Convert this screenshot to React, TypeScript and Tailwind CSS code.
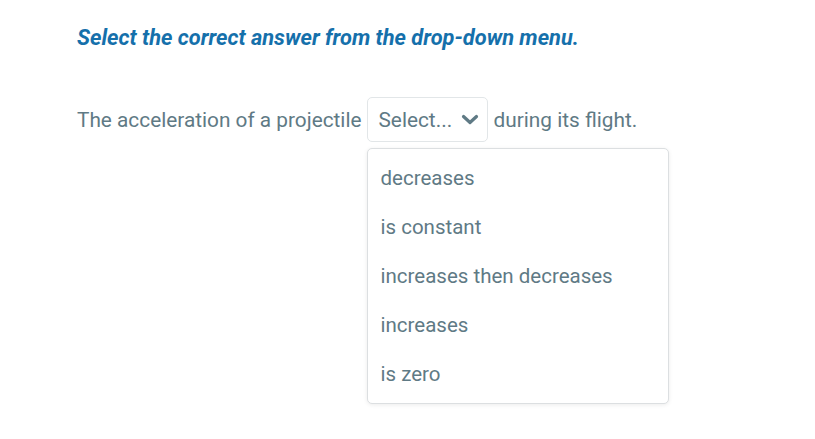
const options = [
  "decreases",
  "is constant",
  "increases then decreases",
  "increases",
  "is zero",
];

export default function App() {
  return (
    <div
      className="min-h-[439px] bg-white px-[77px] pt-[22px] text-[#5f7a85]"
      style={{ fontFamily: "Roboto, 'Liberation Sans', sans-serif" }}
    >
      <h2 className="text-[21.8px] font-bold italic leading-[32px] text-[#1570ab]">
        Select the correct answer from the drop-down menu.
      </h2>

      <div className="mt-[43px] flex items-center text-[20.8px] leading-[28px]">
        <span>The acceleration of a projectile</span>
        <div className="relative ml-[5px] mr-[6px]">
          <button
            type="button"
            className="flex h-[45px] w-[121px] items-center justify-between rounded-[5px] border border-[#e2e6e8] bg-white pl-[11px] pr-[8px] text-[20.8px] text-[#5f7a85]"
          >
            <span>Select...</span>
            <svg width="18" height="13" viewBox="0 0 18 13" fill="none">
              <path
                d="M2.5 3.5l6.5 6 6.5-6"
                stroke="#5f7a85"
                strokeWidth="3.2"
                strokeLinecap="round"
                strokeLinejoin="round"
              />
            </svg>
          </button>

          {/* open menu */}
          <ul className="absolute left-0 top-[51px] w-[302px] rounded-[5px] border border-[#dcdfe1] bg-white pb-[4px] pt-[5px] shadow-[0_1px_4px_rgba(0,0,0,0.08)]">
            {options.map((opt) => (
              <li key={opt} className="h-[49px] px-[13px] text-[20.5px] leading-[49px]">
                {opt}
              </li>
            ))}
          </ul>
        </div>
        <span>during its flight.</span>
      </div>
    </div>
  );
}
